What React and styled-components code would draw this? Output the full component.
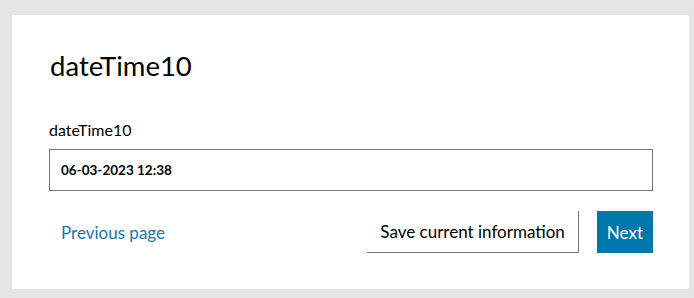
import React from 'react';
import styled, { createGlobalStyle } from 'styled-components';

const GlobalStyle = createGlobalStyle`
  html, body {
    margin: 0;
    padding: 0;
    background: #e4e4e4;
    font-family: "Lato", "Noto Sans", sans-serif;
    color: #000;
  }
`;

const Card = styled.main`
  margin: 15px 5px 9px 12px;
  background: #fff;
  padding: 35px 36px 36px 37px;
`;

const Title = styled.h1`
  margin: 0 0 36px 1px;
  font-size: 27.5px;
  line-height: 32px;
  font-weight: 400;
`;

const Field = styled.div`
  display: flex;
  flex-direction: column;
  gap: 7px;
`;

const Label = styled.label`
  font-size: 16px;
  line-height: 24px;
`;

const Input = styled.input`
  box-sizing: border-box;
  height: 42px;
  width: 100%;
  border: 1px solid #767676;
  padding: 0 11px;
  font-family: inherit;
  font-size: 13.5px;
  font-weight: 700;
  color: #000;
  outline: none;
`;

const Actions = styled.div`
  display: flex;
  align-items: center;
  margin-top: 20px;
  gap: 18px;
`;

const Spacer = styled.div`
  flex: 1;
`;

const Button = styled.button`
  box-sizing: border-box;
  height: 42px;
  padding: 0 ${p => (p.$pad || 12)}px;
  font-family: inherit;
  font-size: 17px;
  cursor: pointer;
  border: none;
  background: ${p => (p.$primary ? '#0077aa' : '#fff')};
  color: ${p => (p.$primary ? '#fff' : p.$link ? '#1a75a8' : '#000')};
  ${p => p.$outlined && `
    border-right: 1px solid #767676;
    border-bottom: 1px solid #767676;
  `}
`;

export default function App() {
  return (
    <>
      <GlobalStyle />
      <Card>
        <Title>dateTime10</Title>
        <Field>
          <Label htmlFor="dt10">dateTime10</Label>
          <Input id="dt10" defaultValue="06-03-2023 12:38" readOnly />
        </Field>
        <Actions>
          <Button $link>Previous page</Button>
          <Spacer />
          <Button $outlined $pad={13}>Save current information</Button>
          <Button $primary $pad={10}>Next</Button>
        </Actions>
      </Card>
    </>
  );
}
